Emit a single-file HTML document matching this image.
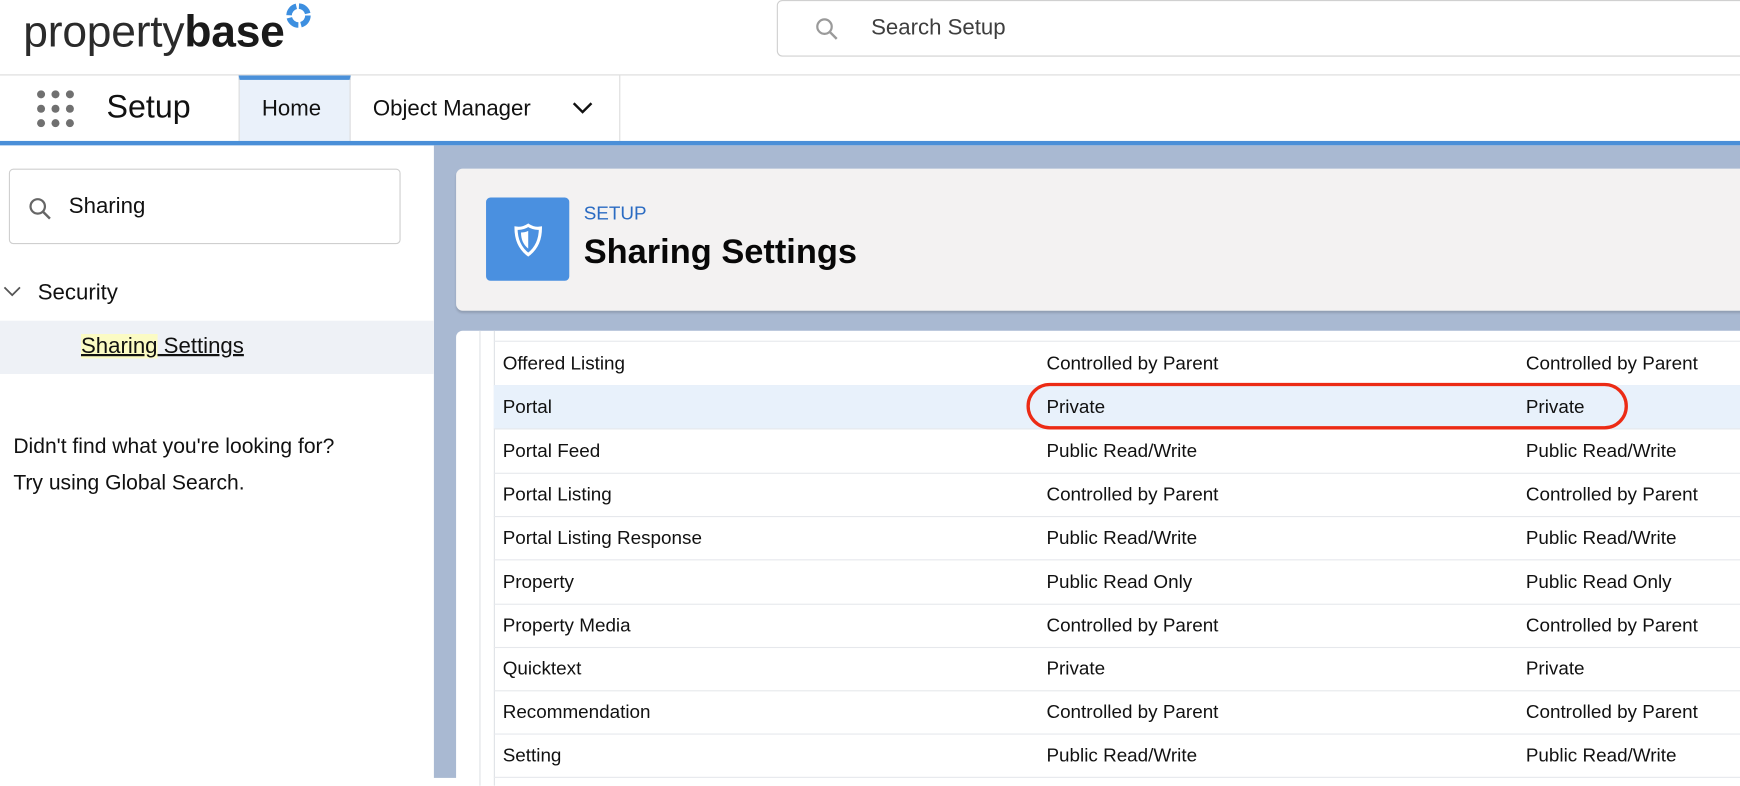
<!DOCTYPE html>
<html><head><meta charset="utf-8"><style>
html,body{margin:0;padding:0;width:1740px;height:764px;overflow:hidden;background:#fff}
#w{position:absolute;left:0;top:0;width:1568px;height:700px;transform:scale(1.1097);transform-origin:0 0;font-family:"Liberation Sans",sans-serif;color:#16325c}
.a{position:absolute}
.row{position:absolute;left:445px;right:0;height:39px;border-bottom:1px solid #e6e8ec;font-size:17px;color:#111}
.row span{position:absolute;top:10px}
.c1{left:8px}.c2{left:498px}.c3{left:930px}
</style></head><body><div id="w">
<div class="a" style="left:21px;top:7px;font-size:40px;color:#2b2b2b;letter-spacing:-0.2px">property<b style="color:#1a1a1a">base</b></div>
<svg class="a" style="left:256px;top:1px" width="26" height="26" viewBox="0 0 26 26"><circle cx="13" cy="13" r="8.5" fill="none" stroke="#3d8fe0" stroke-width="5" stroke-dasharray="11 2.4"/></svg>
<div class="a" style="left:700px;top:0;width:900px;height:51px;border:1px solid #d0d0d0;border-radius:5px;box-sizing:border-box"></div>
<svg class="a" style="left:734px;top:15px" width="22" height="22" viewBox="0 0 22 22"><circle cx="9" cy="9" r="6.5" fill="none" stroke="#9a9a9a" stroke-width="2"/><path d="M14 14l6 6" stroke="#9a9a9a" stroke-width="2.2"/></svg>
<div class="a" style="left:785px;top:14px;font-size:20px;color:#3e3e3e">Search Setup</div>
<div class="a" style="left:0;top:67px;width:1568px;height:1px;background:#dcdcdc"></div>
<svg class="a" style="left:32px;top:80px" width="38" height="36"><g fill="#707070"><circle cx="5" cy="5" r="3.6"/><circle cx="18" cy="5" r="3.6"/><circle cx="31" cy="5" r="3.6"/><circle cx="5" cy="18" r="3.6"/><circle cx="18" cy="18" r="3.6"/><circle cx="31" cy="18" r="3.6"/><circle cx="5" cy="31" r="3.6"/><circle cx="18" cy="31" r="3.6"/><circle cx="31" cy="31" r="3.6"/></g></svg>
<div class="a" style="left:96px;top:81px;font-size:29px;color:#111">Setup</div>
<div class="a" style="left:215px;top:68px;width:101px;height:59px;background:#eaf1fa;border-top:4px solid #4a90d9;box-sizing:border-box;border-right:1px solid #ddd;border-left:1px solid #ddd"></div>
<div class="a" style="left:236px;top:87px;font-size:20px;color:#111">Home</div>
<div class="a" style="left:558px;top:68px;width:1px;height:59px;background:#ddd"></div>
<div class="a" style="left:336px;top:87px;font-size:20px;color:#111">Object Manager</div>
<svg class="a" style="left:515px;top:90px" width="20" height="14"><path d="M2 3l8 8 8-8" fill="none" stroke="#111" stroke-width="2.2"/></svg>
<div class="a" style="left:0;top:127px;width:1568px;height:4px;background:#4a8fd8"></div>
<div class="a" style="left:391px;top:131px;width:1177px;height:570px;background:#a9b9d2"></div>
<div class="a" style="left:8px;top:152px;width:353px;height:68px;border:1px solid #cfcfcf;border-radius:4px;box-sizing:border-box"></div>
<svg class="a" style="left:25px;top:177px" width="22" height="22" viewBox="0 0 22 22"><circle cx="9" cy="9" r="6.5" fill="none" stroke="#666" stroke-width="2"/><path d="M14 14l6 6" stroke="#666" stroke-width="2.2"/></svg>
<div class="a" style="left:62px;top:175px;font-size:20px;color:#111">Sharing</div>
<svg class="a" style="left:2px;top:256px" width="18" height="14"><path d="M2 3l7 7 7-7" fill="none" stroke="#555" stroke-width="1.6"/></svg>
<div class="a" style="left:34px;top:253px;font-size:20px;color:#111">Security</div>
<div class="a" style="left:0;top:289px;width:391px;height:48px;background:#eef1f6"></div>
<div class="a" style="left:73px;top:301px;font-size:20px;color:#111;text-decoration:underline"><span style="background:#fbfbc4">Sharing</span> Settings</div>
<div class="a" style="left:12px;top:386px;font-size:19px;color:#111;line-height:33px">Didn't find what you're looking for?<br>Try using Global Search.</div>
<div class="a" style="left:411px;top:152px;width:1170px;height:128px;background:#f3f2f2;border-radius:6px;box-shadow:0 2px 2px rgba(0,0,0,.15)"></div>
<div class="a" style="left:438px;top:178px;width:75px;height:75px;background:#4a90e0;border-radius:4px"></div>
<svg class="a" style="left:461px;top:200px" width="30" height="32" viewBox="0 0 30 32"><path d="M15 3c4 2.5 8 3 11 2.5 0 10-3 18-11 24C7 23.5 4 15.5 4 5.5 7 6 11 5.5 15 3z" fill="none" stroke="#fff" stroke-width="2.8"/><path d="M15 8c-2 1-4 1.5-6.5 1.5 0 6 2 11 6.5 14.5z" fill="#fff"/></svg>
<div class="a" style="left:526px;top:183px;font-size:17px;color:#2a6bc2">SETUP</div>
<div class="a" style="left:526px;top:209px;font-size:31px;font-weight:bold;color:#080808">Sharing Settings</div>
<div class="a" style="left:411px;top:298px;width:1170px;height:410px;background:#fff;border-radius:6px 0 0 0"></div>
<div class="a" style="left:432px;top:298px;width:1px;height:410px;background:#dfe2e6"></div>
<div class="a" style="left:445px;top:298px;width:1px;height:410px;background:#dfe2e6"></div>
<div class="a" style="left:445px;top:307px;right:0;height:1px;background:#e6e8ec"></div>
<div class="row" style="top:308px"><span class="c1">Offered Listing</span><span class="c2">Controlled by Parent</span><span class="c3">Controlled by Parent</span></div>
<div class="row" style="top:347px;background:#e8f1fb"><span class="c1">Portal</span><span class="c2">Private</span><span class="c3">Private</span></div>
<div class="row" style="top:387px"><span class="c1">Portal Feed</span><span class="c2">Public Read/Write</span><span class="c3">Public Read/Write</span></div>
<div class="row" style="top:426px"><span class="c1">Portal Listing</span><span class="c2">Controlled by Parent</span><span class="c3">Controlled by Parent</span></div>
<div class="row" style="top:465px"><span class="c1">Portal Listing Response</span><span class="c2">Public Read/Write</span><span class="c3">Public Read/Write</span></div>
<div class="row" style="top:505px"><span class="c1">Property</span><span class="c2">Public Read Only</span><span class="c3">Public Read Only</span></div>
<div class="row" style="top:544px"><span class="c1">Property Media</span><span class="c2">Controlled by Parent</span><span class="c3">Controlled by Parent</span></div>
<div class="row" style="top:583px"><span class="c1">Quicktext</span><span class="c2">Private</span><span class="c3">Private</span></div>
<div class="row" style="top:622px"><span class="c1">Recommendation</span><span class="c2">Controlled by Parent</span><span class="c3">Controlled by Parent</span></div>
<div class="row" style="top:661px"><span class="c1">Setting</span><span class="c2">Public Read/Write</span><span class="c3">Public Read/Write</span></div>
<div class="a" style="left:925px;top:345px;width:542px;height:42px;border:3px solid #ec2b15;border-radius:21px;box-sizing:border-box"></div>
</div></body></html>
